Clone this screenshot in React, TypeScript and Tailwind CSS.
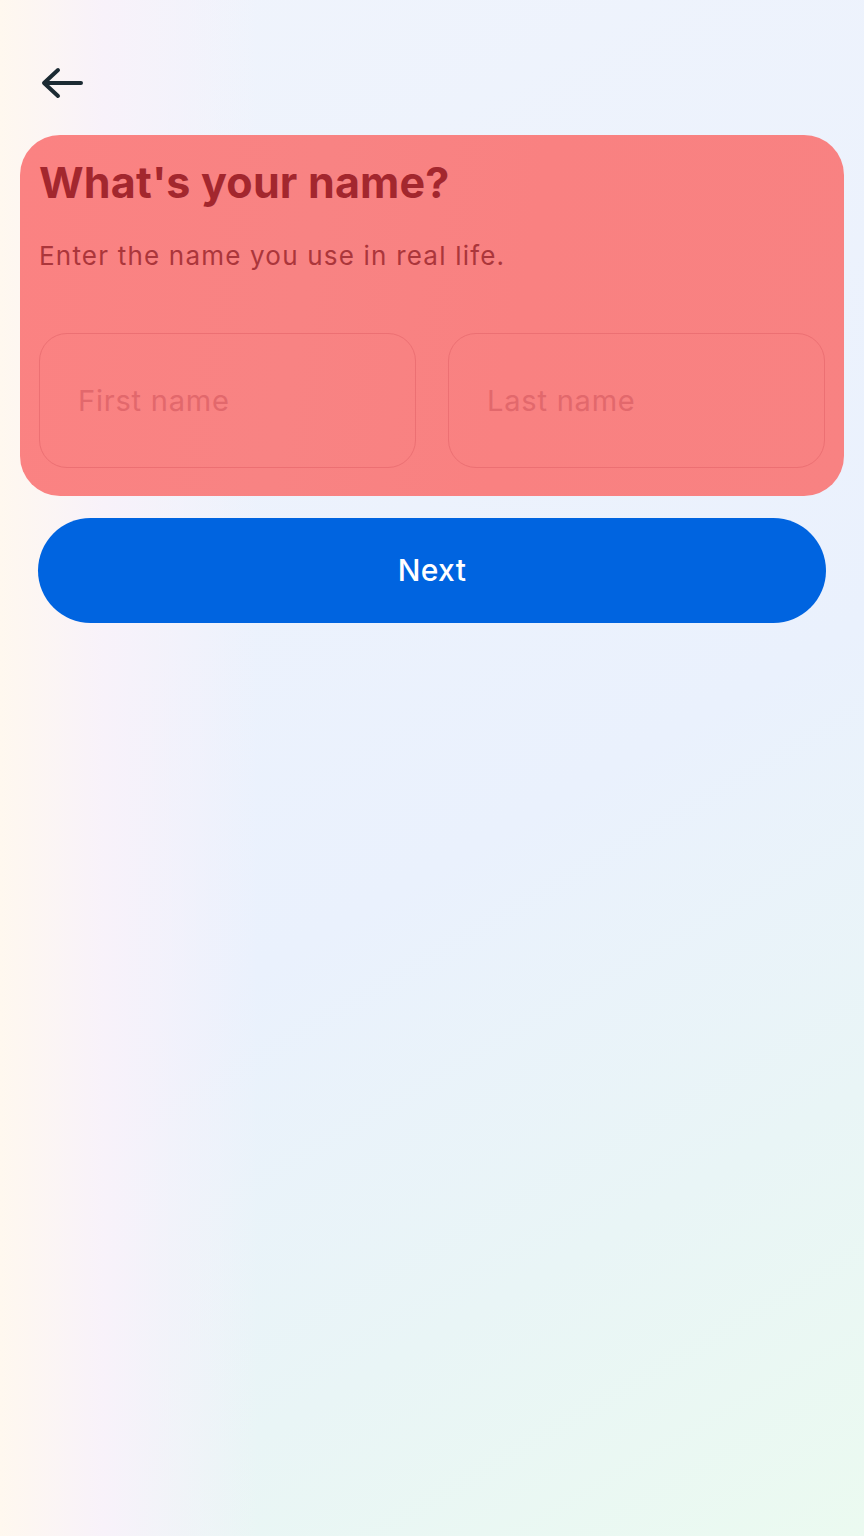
import React from "react";

export default function App() {
  return (
    <div
      className="min-h-[1536px] w-full bg-[image:linear-gradient(90deg,#fff8ef_0%,#f8f2fa_12%,rgba(238,243,253,0)_30%),linear-gradient(150deg,#f0f4fc_0%,#eaf1fd_55%,#e9f5f6_78%,#ebfaf0_100%)] px-[20px] pt-[64px]"
      style={{ fontFamily: "Inter, 'Noto Sans', sans-serif" }}
    >
      <div className="h-[40px] pl-[20px]">
        <svg width="44" height="36" viewBox="0 0 44 36" fill="none" className="ml-[1px]">
          <path
            d="M40 19H4M17 6L3 19L17 32"
            stroke="#1c2b33"
            strokeWidth="4"
            strokeLinecap="round"
            strokeLinejoin="round"
          />
        </svg>
      </div>
      <div className="mt-[31px] rounded-[40px] bg-[image:linear-gradient(100deg,#fb8282_0%,#f88383_35%,#f98181_60%,#f88282_100%)] px-[19px] pt-[19px] pb-[28px]">
        <h1 className="text-[43px] font-bold leading-[56px] text-[#a3272e] tracking-[0.2px]">
          What's your name?
        </h1>
        <p className="mt-[30px] text-[26px] leading-[32px] text-[#ab363b] tracking-[1.2px]">
          Enter the name you use in real life.
        </p>
        <div className="mt-[61px] grid grid-cols-2 gap-[32px]">
          <div className="flex h-[135px] items-center rounded-[28px] border-[1.5px] border-[#ec7073] pl-[38px]">
            <span className="text-[29px] text-[#e2686c] tracking-[0.8px]">First name</span>
          </div>
          <div className="flex h-[135px] items-center rounded-[28px] border-[1.5px] border-[#ec7073] pl-[38px]">
            <span className="text-[29px] text-[#e2686c] tracking-[0.8px]">Last name</span>
          </div>
        </div>
      </div>
      <div className="mt-[22px] px-[18px]">
        <button className="flex h-[105px] w-full items-center justify-center rounded-full bg-[#0064e0]">
          <span className="text-[30px] font-medium text-white tracking-[0.3px]">Next</span>
        </button>
      </div>
    </div>
  );
}
